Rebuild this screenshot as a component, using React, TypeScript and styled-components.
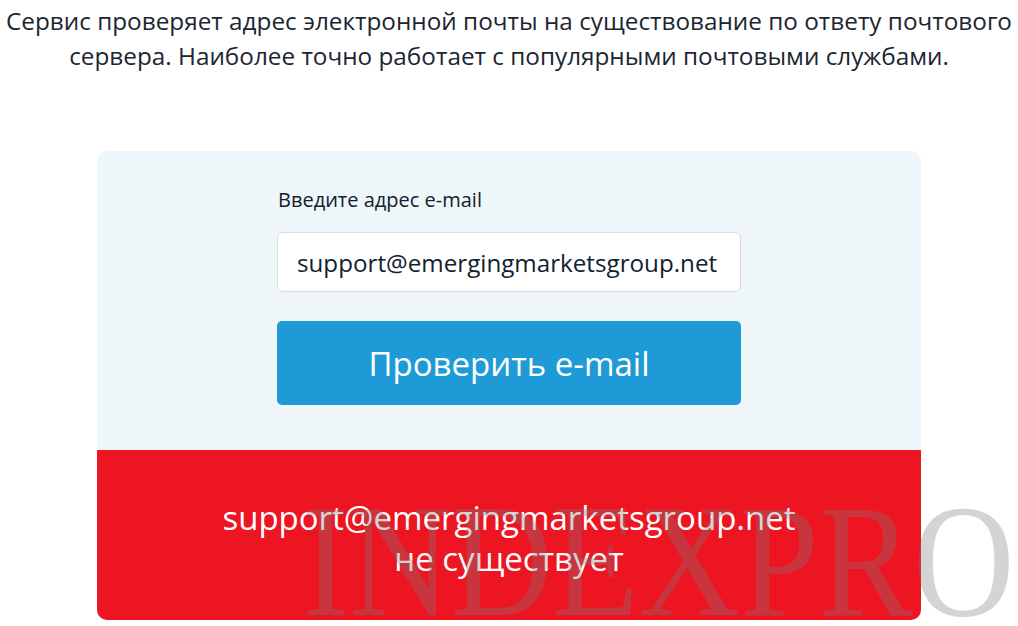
import React from "react";
import styled, { createGlobalStyle } from "styled-components";

const Global = createGlobalStyle`
  html, body { margin: 0; padding: 0; background: #ffffff; }
  body { font-family: "Open Sans", Lato, sans-serif; overflow: hidden; }
  * { box-sizing: border-box; }
`;

const Page = styled.div`
  position: relative;
  width: 1018px;
  height: 626px;
  overflow: hidden;
  display: flex;
  flex-direction: column;
  align-items: center;
  padding-top: 3px;
`;

const Intro = styled.p`
  margin: 0;
  width: 1018px;
  text-align: center;
  font-size: 24.3px;
  line-height: 35px;
  color: #1b2631;
`;

const Card = styled.section`
  margin-top: 78px;
  width: 824px;
  border-radius: 10px;
  overflow: hidden;
  display: flex;
  flex-direction: column;
`;

const FormArea = styled.div`
  height: 299px;
  background: #eff6fa;
  display: flex;
  justify-content: center;
  padding-top: 36px;
`;

const Column = styled.div`
  width: 464px;
  display: flex;
  flex-direction: column;
`;

const Label = styled.label`
  font-size: 20px;
  line-height: 26px;
  color: #10212f;
  padding-left: 1px;
`;

const Input = styled.div`
  margin-top: 19px;
  height: 60px;
  background: #ffffff;
  border: 1px solid #d9dde0;
  border-radius: 6px;
  display: flex;
  align-items: center;
  padding-left: 19px;
  font-size: 24.2px;
  color: #10212f;
`;

const Button = styled.button`
  margin-top: 29px;
  height: 84px;
  border: none;
  border-radius: 5px;
  background: #1e9bd7;
  color: #ffffff;
  font-family: inherit;
  font-size: 33px;
  cursor: pointer;
`;

const Result = styled.div`
  height: 170px;
  background: #ee1522;
  display: flex;
  flex-direction: column;
  align-items: center;
  justify-content: center;
  color: #ffffff;
  font-size: 33px;
  line-height: 41px;
  padding-top: 6px;
`;

const Watermark = styled.div`
  position: absolute;
  left: 302px;
  top: 480px;
  font-family: "Liberation Serif", "Times New Roman", serif;
  font-size: 162px;
  line-height: 1;
  color: rgba(120, 120, 120, 0.32);
  transform: scaleX(0.87);
  transform-origin: left top;
  pointer-events: none;
  white-space: nowrap;
`;

export default function App() {
  return (
    <>
      <Global />
      <Page>
        <Intro>
          Сервис проверяет адрес электронной почты на существование по ответу почтового
          <br />
          сервера. Наиболее точно работает с популярными почтовыми службами.
        </Intro>
        <Card>
          <FormArea>
            <Column>
              <Label>Введите адрес e-mail</Label>
              <Input>support@emergingmarketsgroup.net</Input>
              <Button>Проверить e-mail</Button>
            </Column>
          </FormArea>
          <Result>
            <div>support@emergingmarketsgroup.net</div>
            <div>не существует</div>
          </Result>
        </Card>
        <Watermark>INDEXPRO</Watermark>
      </Page>
    </>
  );
}
